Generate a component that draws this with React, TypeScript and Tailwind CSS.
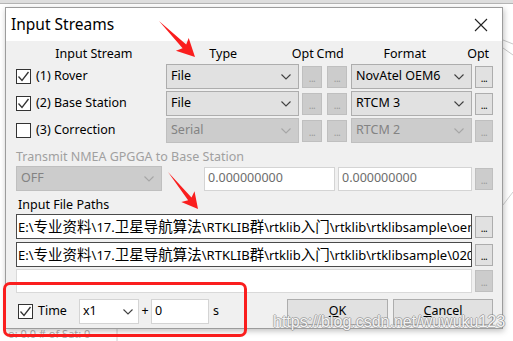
import React from 'react';

const Chevron: React.FC<{ color?: string }> = ({ color = '#404040' }) => (
  <svg width="10" height="6" viewBox="0 0 10 6" className="shrink-0">
    <polyline points="0.5,0.5 5,5 9.5,0.5" fill="none" stroke={color} strokeWidth="1.1" />
  </svg>
);

const Check: React.FC<{ checked?: boolean }> = ({ checked }) => (
  <div className="w-[15px] h-[15px] border border-[#333333] bg-white shrink-0 flex items-center justify-center">
    {checked && (
      <svg width="13" height="13" viewBox="0 0 13 13">
        <polyline points="1.5,6.5 5,10.5 11.5,2" fill="none" stroke="#333333" strokeWidth="1.3" />
      </svg>
    )}
  </div>
);

const Select: React.FC<{ value: string; w: string; disabled?: boolean }> = ({ value, w, disabled }) => (
  <div
    className={`${w} h-[25px] flex items-center justify-between pl-[4px] pr-[7px] border ${
      disabled ? 'bg-[#cccccc] border-[#bfbfbf] text-[#838383]' : 'bg-[#e1e1e1] border-[#adadad] text-black'
    }`}
  >
    <span>{value}</span>
    <Chevron color={disabled ? '#a6a6a6' : '#404040'} />
  </div>
);

const Dots: React.FC<{ w?: string; disabled?: boolean; h?: string }> = ({ w = 'w-[18px]', disabled, h = 'h-[22px]' }) => (
  <div
    className={`${w} ${h} shrink-0 border flex items-end justify-center pb-[4px] text-[10px] leading-none tracking-[-0.5px] ${
      disabled ? 'bg-[#cccccc] border-[#bfbfbf] text-[#9a9a9a]' : 'bg-[#e1e1e1] border-[#adadad] text-black'
    }`}
  >
    ...
  </div>
);

const StreamRow: React.FC<{ label: string; checked: boolean; type: string; format: string; disabled?: boolean }> = ({
  label,
  checked,
  type,
  format,
  disabled,
}) => (
  <div className="flex items-center h-[25px]">
    <div className="w-[150px] flex items-center gap-[5px]">
      <Check checked={checked} />
      <span>{label}</span>
    </div>
    <Select value={type} w="w-[133px]" disabled={disabled} />
    <div className="ml-[3px]">
      <Dots w="w-[20px]" disabled />
    </div>
    <div className="ml-[5px]">
      <Dots w="w-[20px]" disabled />
    </div>
    <div className="ml-[4px]">
      <Select value={format} w="w-[121px]" disabled={disabled} />
    </div>
    <div className="ml-[3px]">
      <Dots disabled={disabled} />
    </div>
  </div>
);

// CJK runs are drawn a little larger, like the YaHei fallback in the original
const PathText: React.FC<{ text: string }> = ({ text }) => (
  <>
    {text.split(/([\u4e00-\u9fff]+)/).map((s, i) =>
      /[\u4e00-\u9fff]/.test(s) ? (
        <span key={i} className="text-[14.5px]">
          {s}
        </span>
      ) : (
        <span key={i}>{s}</span>
      )
    )}
  </>
);

const PathRow: React.FC<{ value: string; dark?: boolean; h?: string; disabledBtn?: boolean }> = ({ value, dark, h = 'h-[25px]', disabledBtn }) => (
  <div className={`flex items-center ${h}`}>
    <div
      className={`w-[456px] shrink-0 h-full bg-white border overflow-hidden pl-[1px] flex items-center text-black ${
        dark ? 'border-[#4a4a4a]' : 'border-[#d9d9d9]'
      }`}
    >
      <div className="w-full overflow-hidden whitespace-nowrap text-[13px]">
        <PathText text={value} />
      </div>
    </div>
    <div className="ml-[3px]">
      <Dots disabled={disabledBtn} />
    </div>
  </div>
);

export default function App() {
  return (
    <div className="relative w-[513px] h-[341px] overflow-hidden bg-white pt-[7px] pl-[5px] font-['Noto_Sans','Noto_Sans_CJK_SC',sans-serif] text-[12.5px] text-black">
      {/* window behind */}
      <div className="absolute left-0 top-0 w-[513px] h-[4px] bg-[#dedede] border-b border-[#b5b5b5]" />
      <div className="absolute left-[8px] bottom-[2px] text-[11px] text-[#b0b0b0] leading-none">o: 0.0 # of Sat: 0</div>
      <svg className="absolute inset-0 pointer-events-none" width="513" height="341">
        <line x1="503" y1="40" x2="513" y2="44" stroke="#c8c8c8" />
        <line x1="503" y1="48" x2="513" y2="55" stroke="#c8c8c8" />
        <line x1="503" y1="205" x2="513" y2="192" stroke="#d0d0d0" />
        <line x1="117" y1="329" x2="117" y2="341" stroke="#d0d0d0" />
      </svg>

      <div className="relative w-[498px] h-[322px] flex flex-col border border-[#9c9c9c] bg-[#f0f0f0] shadow-[1px_2px_6px_rgba(0,0,0,0.25)]">
        <div className="h-[33px] bg-white flex items-center justify-between pl-[5px] pr-[14px]">
          <span className="text-[15.5px]">Input Streams</span>
          <svg width="14" height="14" viewBox="0 0 14 14">
            <path d="M1 1 L13 13 M13 1 L1 13" stroke="#222" strokeWidth="1.1" />
          </svg>
        </div>

        <div className="flex-1 flex flex-col pl-[10px] pr-[9px] pt-[5px]">
          <div className="flex h-[16px] leading-[16px] mb-[2px]">
            <div className="w-[157px] text-center">Input Stream</div>
            <div className="w-[104px] text-center">Type</div>
            <div className="w-[17px]" />
            <div className="w-[25px]">Opt</div>
            <div className="w-[30px]">Cmd</div>
            <div className="w-[118px] text-center">Format</div>
            <div className="w-[30px] text-center">Opt</div>
          </div>

          <div className="flex flex-col gap-[2px]">
            <StreamRow label="(1) Rover" checked type="File" format="NovAtel OEM6" />
            <StreamRow label="(2) Base Station" checked type="File" format="RTCM 3" />
            <StreamRow label="(3) Correction" checked={false} type="Serial" format="RTCM 2" disabled />
          </div>

          <div className="mt-[6px] h-[16px] leading-[16px] text-[#a0a0a0]">Transmit NMEA GPGGA to Base Station</div>

          <div className="mt-[1px] flex items-center h-[25px]">
            <Select value="OFF" w="w-[146px]" disabled />
            <div className="ml-[42px] w-[131px] h-[24px] bg-white border border-[#d4d4d4] pl-[3px] flex items-center text-[#6d6d6d]">
              0.000000000
            </div>
            <div className="ml-[3px] w-[134px] h-[24px] bg-white border border-[#d4d4d4] pl-[3px] flex items-center text-[#6d6d6d]">
              0.000000000
            </div>
            <div className="ml-[3px]">
              <Dots disabled />
            </div>
          </div>

          <div className="mt-[6px] h-[16px] leading-[16px] pl-[2px]">Input File Paths</div>

          <div className="mt-[1px]">
            <PathRow dark value="E:\专业资料\17.卫星导航算法\RTKLIB群\rtklib入门\rtklib\rtklibsample\oem6_20121107.gps" />
          </div>
          <div className="mt-[3px]">
            <PathRow dark value="E:\专业资料\17.卫星导航算法\RTKLIB群\rtklib入门\rtklib\rtklibsample\0207.obs" />
          </div>
          <div className="mt-[2px]">
            <PathRow value="" h="h-[24px]" disabledBtn />
          </div>

          <div className="mt-[6px] flex items-center h-[25px]">
            <div className="w-[63px] flex items-center gap-[5px] pl-[2px]">
              <Check checked />
              <span>Time</span>
            </div>
            <div className="w-[60px] h-[25px] bg-white border border-[#d4d4d4] flex items-center justify-between pl-[3px] pr-[5px]">
              <span>x1</span>
              <Chevron />
            </div>
            <div className="w-[12px] text-center">+</div>
            <div className="w-[58px] h-[25px] bg-white border border-[#d4d4d4] pl-[3px] flex items-center">0</div>
            <div className="ml-[4px]">s</div>
            <div className="flex-1" />
            <div className="w-[101px] h-[26px] bg-[#e1e1e1] border border-[#adadad] flex items-center justify-center">
              <span>
                <span className="underline">O</span>K
              </span>
            </div>
            <div className="ml-[5px] w-[100px] h-[26px] bg-[#e1e1e1] border border-[#adadad] flex items-center justify-center">
              <span>
                <span className="underline">C</span>ancel
              </span>
            </div>
          </div>
        </div>
      </div>

      {/* annotations */}
      <div className="absolute left-[3px] top-[282px] w-[244px] h-[55px] border-[3px] border-[#fa1e1e] rounded-[7px] pointer-events-none" />
      <svg className="absolute inset-0 pointer-events-none" width="513" height="341">
        <polygon points="159,21 186.2,44.6 188.7,37.9 195,57 175.9,50.7 182.6,48.2" fill="#fa1e1e" />
        <polygon points="168,172 191.5,197.5 194.5,191.2 198,209 181.3,202 188.1,200.3" fill="#fa1e1e" />
      </svg>
      <div className="absolute left-[273px] top-[313px] font-['Liberation_Sans',sans-serif] text-[16px] leading-[18px] text-white/90 [text-shadow:1px_0_0_rgba(110,110,110,0.45),-1px_0_0_rgba(110,110,110,0.45),0_1px_0_rgba(110,110,110,0.45),0_-1px_0_rgba(110,110,110,0.45)] pointer-events-none">
        https://blog.csdn.net/wuwuku123
      </div>
    </div>
  );
}
